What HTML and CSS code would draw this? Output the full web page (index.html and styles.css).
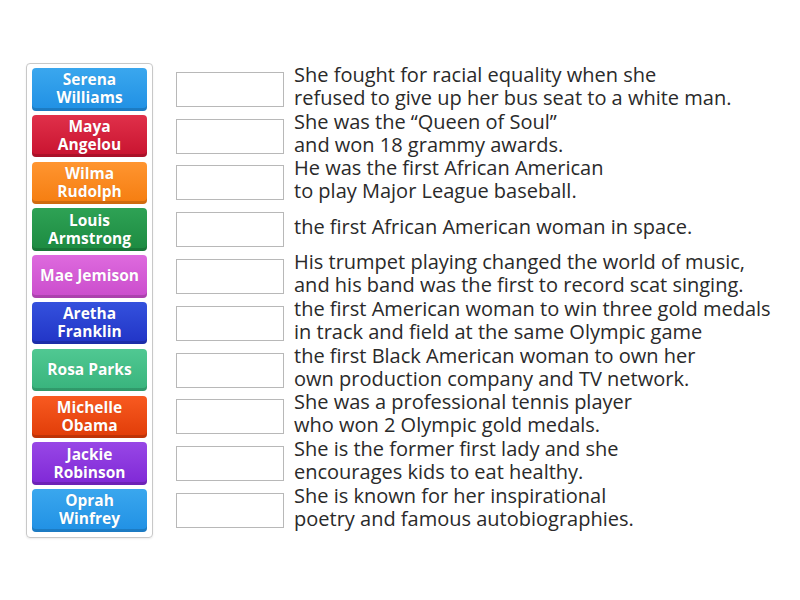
FILE: index.html
```html
<!DOCTYPE html>
<html>
<head>
<meta charset="utf-8">
<link rel="stylesheet" href="styles.css">
</head>
<body>
<div class="game">
  <div class="panel">
    <div class="tile blue">Serena<br>Williams</div>
    <div class="tile red">Maya<br>Angelou</div>
    <div class="tile orange">Wilma<br>Rudolph</div>
    <div class="tile green">Louis<br>Armstrong</div>
    <div class="tile pink">Mae Jemison</div>
    <div class="tile navy">Aretha<br>Franklin</div>
    <div class="tile mint">Rosa Parks</div>
    <div class="tile redorange">Michelle<br>Obama</div>
    <div class="tile purple">Jackie<br>Robinson</div>
    <div class="tile blue">Oprah<br>Winfrey</div>
  </div>
  <div class="rows">
    <div class="row"><div class="box"></div><div class="clue">She fought for racial equality when she<br>refused to give up her bus seat to a white man.</div></div>
    <div class="row"><div class="box"></div><div class="clue">She was the “Queen of Soul”<br>and won 18 grammy awards.</div></div>
    <div class="row"><div class="box"></div><div class="clue">He was the first African American<br>to play Major League baseball.</div></div>
    <div class="row"><div class="box"></div><div class="clue">the first African American woman in space.</div></div>
    <div class="row"><div class="box"></div><div class="clue">His trumpet playing changed the world of music,<br>and his band was the first to record scat singing.</div></div>
    <div class="row"><div class="box"></div><div class="clue">the first American woman to win three gold medals<br>in track and field at the same Olympic game</div></div>
    <div class="row"><div class="box"></div><div class="clue">the first Black American woman to own her<br>own production company and TV network.</div></div>
    <div class="row"><div class="box"></div><div class="clue">She was a professional tennis player<br>who won 2 Olympic gold medals.</div></div>
    <div class="row"><div class="box"></div><div class="clue">She is the former first lady and she<br>encourages kids to eat healthy.</div></div>
    <div class="row"><div class="box"></div><div class="clue">She is known for her inspirational<br>poetry and famous autobiographies.</div></div>
  </div>
</div>
</body>
</html>
```

FILE: styles.css
```css
html, body {
  margin: 0;
  padding: 0;
  background: #ffffff;
}
body {
  width: 800px;
  height: 600px;
  font-family: "Open Sans", "DejaVu Sans", sans-serif;
  overflow: hidden;
}
.game {
  display: flex;
  align-items: flex-start;
  padding: 63px 0 0 26px;
}
.panel {
  width: 115px;
  padding: 4px 5px 5px 5px;
  border: 1px solid #c8c8c8;
  border-radius: 4px;
  box-shadow: 0 1px 2px rgba(0,0,0,0.08);
  display: flex;
  flex-direction: column;
  gap: 4.3px;
}
.tile {
  height: 42.5px;
  box-sizing: border-box;
  border-radius: 4px;
  color: #ffffff;
  font-weight: 700;
  font-size: 15.5px;
  line-height: 18px;
  text-align: center;
  display: flex;
  align-items: center;
  justify-content: center;
  padding-bottom: 2px;
  box-shadow: inset 0 -3px 0 rgba(0,0,0,0.15);
  text-shadow: 0 0 1px rgba(0,0,0,0.15);
}
.blue { background: linear-gradient(#3aa7ee, #2090e4); }
.red { background: linear-gradient(#e0304a, #c8132f); }
.orange { background: linear-gradient(#ff9530, #f57d10); }
.green { background: linear-gradient(#2ea255, #1c8a40); }
.pink { background: linear-gradient(#de6ade, #ca4ccc); }
.navy { background: linear-gradient(#3451dd, #2134c6); }
.mint { background: linear-gradient(#50c892, #38b37c); }
.redorange { background: linear-gradient(#f85a20, #e03c08); }
.purple { background: linear-gradient(#9847e6, #7f28d6); }
.rows {
  margin-left: 23px;
  padding-top: 5px;
  display: flex;
  flex-direction: column;
  gap: 4.3px;
}
.row {
  height: 42.5px;
  display: flex;
  align-items: center;
}
.box {
  width: 106px;
  height: 33px;
  border: 1px solid #b8b8b8;
  background: #fff;
  flex: none;
}
.clue {
  margin-left: 10px;
  margin-top: -7px;
  font-size: 20px;
  line-height: 23px;
  color: #2a2a2a;
  white-space: nowrap;
}
```
